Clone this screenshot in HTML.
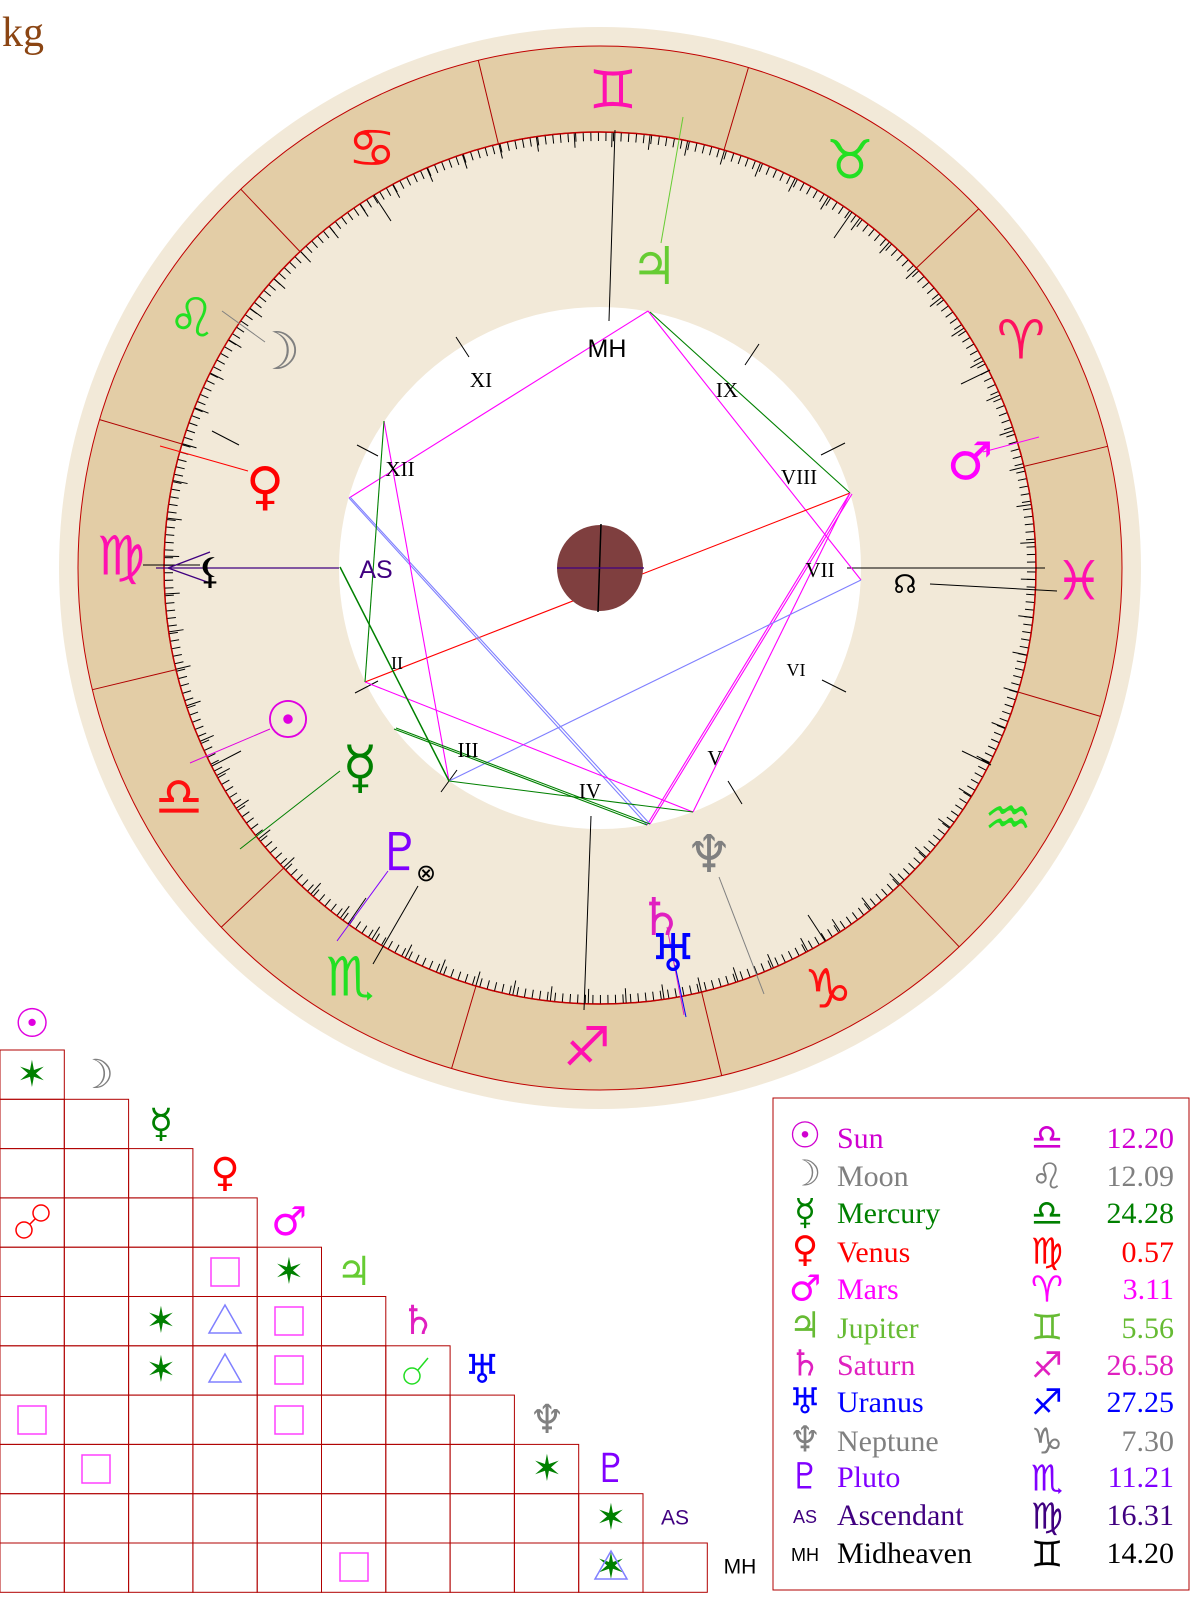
<!DOCTYPE html>
<html><head><meta charset="utf-8"><style>
html,body{margin:0;padding:0;background:#fff;}
svg{display:block}
.g{font-family:"DejaVu Sans",sans-serif;text-anchor:middle;dominant-baseline:central}
.s{font-family:"Liberation Serif",serif}
.ss{font-family:"Liberation Sans",sans-serif}
</style></head><body>
<svg width="1200" height="1600" viewBox="0 0 1200 1600" xmlns="http://www.w3.org/2000/svg">
<text x="2" y="46" class="s" font-size="42" fill="#8b4513">kg</text>

<circle cx="600" cy="568" r="541" fill="#f2e9d8"/>
<circle cx="600" cy="568" r="522" fill="#e3cda6" stroke="#c00000" stroke-width="1"/>
<circle cx="600" cy="568" r="436" fill="#f2e9d8" stroke="#c00000" stroke-width="1.5"/>
<circle cx="600" cy="568" r="261" fill="#fff"/>
<circle cx="600" cy="568" r="431.5" fill="none" stroke="#000" stroke-width="9" stroke-dasharray="1 6.566" stroke-dashoffset="-3.43"/>
<circle cx="600" cy="568" r="428.5" fill="none" stroke="#000" stroke-width="15" stroke-dasharray="1 36.4" stroke-dashoffset="-10.9"/>
<circle cx="600" cy="568" r="436" fill="none" stroke="#c00000" stroke-width="1.2"/>

<g stroke="#b00000" stroke-width="1">
<line x1="1024" y1="466.4" x2="1107.6" y2="446.3"/>
<line x1="916.4" y1="268" x2="978.8" y2="208.8"/>
<line x1="724" y1="150" x2="748.4" y2="67.6"/>
<line x1="498.4" y1="144" x2="478.3" y2="60.4"/>
<line x1="300" y1="251.6" x2="240.8" y2="189.2"/>
<line x1="182" y1="444" x2="99.6" y2="419.6"/>
<line x1="176" y1="669.6" x2="92.4" y2="689.7"/>
<line x1="283.6" y1="868.1" x2="221.2" y2="927.2"/>
<line x1="476" y1="986" x2="451.6" y2="1068.4"/>
<line x1="701.6" y1="992" x2="721.7" y2="1075.6"/>
<line x1="900.1" y1="884.4" x2="959.2" y2="946.8"/>
<line x1="1018" y1="692" x2="1100.4" y2="716.4"/>
</g>

<g class="g" font-size="54">
<text x="1021" y="340" fill="#ff1060">♈&#xFE0E;</text>
<text x="850" y="160" fill="#22e022">♉&#xFE0E;</text>
<text x="613" y="90" fill="#ff10b0">♊&#xFE0E;</text>
<text x="372" y="148" fill="#ff1010">♋&#xFE0E;</text>
<text x="192" y="318" fill="#22e022">♌&#xFE0E;</text>
<text x="121" y="556" fill="#ff10b0">♍&#xFE0E;</text>
<text x="179" y="797" fill="#ff1010">♎&#xFE0E;</text>
<text x="350" y="977" fill="#22e022">♏&#xFE0E;</text>
<text x="587" y="1047" fill="#ff10b0">♐&#xFE0E;</text>
<text x="828" y="989" fill="#ff1010">♑&#xFE0E;</text>
<text x="1008" y="818" fill="#22e022">♒&#xFE0E;</text>
<text x="1079" y="581" fill="#ff10b0">♓&#xFE0E;</text>
</g>

<g stroke="#000" stroke-width="1">
<line x1="239" y1="445" x2="212" y2="431"/>
<line x1="241" y1="751" x2="212" y2="766"/>
<line x1="366" y1="898" x2="348" y2="924"/>
<line x1="808" y1="915" x2="825" y2="941"/>
<line x1="962" y1="751" x2="991" y2="765"/>
<line x1="961" y1="384" x2="990" y2="370"/>
<line x1="834" y1="238" x2="852" y2="212"/>
<line x1="391" y1="221" x2="374" y2="195"/>
<line x1="456" y1="337" x2="469" y2="357"/>
<line x1="357" y1="445" x2="378" y2="456"/>
<line x1="355" y1="693" x2="378" y2="681"/>
<line x1="441" y1="792" x2="457" y2="770"/>
<line x1="742" y1="804" x2="728" y2="781"/>
<line x1="846" y1="692" x2="822" y2="680"/>
<line x1="845" y1="443" x2="821" y2="455"/>
<line x1="759" y1="344" x2="745" y2="365"/>
<line x1="609" y1="321" x2="615" y2="130"/>
<line x1="591" y1="816" x2="584" y2="1010"/>
<line x1="847" y1="568" x2="1045" y2="568"/>
<line x1="143" y1="565" x2="200" y2="565"/>
</g>
<g stroke="#400080" stroke-width="1.3" fill="none">
<line x1="339" y1="568" x2="156" y2="568"/>
<line x1="168" y1="568" x2="210" y2="552"/>
<line x1="168" y1="568" x2="210" y2="583"/>
</g>

<g fill="none" stroke-width="1.1">
<line x1="349" y1="498" x2="648" y2="311" stroke="#ff00ff"/>
<line x1="648" y1="311" x2="861" y2="580" stroke="#ff00ff"/>
<line x1="650" y1="312" x2="850" y2="493" stroke="#008000"/>
<line x1="850" y1="493" x2="365" y2="682" stroke="#ff0000"/>
<line x1="850" y1="493" x2="693" y2="812" stroke="#ff00ff"/>
<line x1="850" y1="493" x2="647" y2="825" stroke="#ff00ff"/>
<line x1="852" y1="494" x2="650" y2="824" stroke="#ff00ff"/>
<line x1="449" y1="781" x2="861" y2="580" stroke="#7f7fff"/>
<line x1="349" y1="498" x2="647" y2="825" stroke="#7f7fff"/>
<line x1="350" y1="497" x2="650" y2="824" stroke="#7f7fff"/>
<line x1="384" y1="421" x2="449" y2="781" stroke="#ff00ff"/>
<line x1="384" y1="421" x2="365" y2="682" stroke="#008000"/>
<line x1="365" y1="682" x2="693" y2="812" stroke="#ff00ff"/>
<line x1="449" y1="781" x2="693" y2="812" stroke="#008000"/>
<line x1="340" y1="567" x2="449" y2="781" stroke="#008000" stroke-width="1.5"/>
<line x1="394" y1="729" x2="647" y2="825" stroke="#008000"/>
<line x1="396" y1="728" x2="650" y2="824" stroke="#008000"/>
</g>

<circle cx="600" cy="568" r="43" fill="#7f3f3f"/>
<line x1="601" y1="524" x2="598" y2="612" stroke="#000" stroke-width="1.5"/>
<line x1="557" y1="568" x2="644" y2="568" stroke="#400080" stroke-width="1.2"/>

<g class="s" font-size="21" fill="#000" text-anchor="middle" dominant-baseline="central">
<text x="481" y="380">XI</text>
<text x="400" y="469">XII</text>
<text x="397" y="663" font-size="18">II</text>
<text x="468" y="750">III</text>
<text x="590" y="791">IV</text>
<text x="715" y="758">V</text>
<text x="796" y="670" font-size="18">VI</text>
<text x="820" y="570">VII</text>
<text x="799" y="477">VIII</text>
<text x="727" y="390">IX</text>
</g>
<text x="607" y="349" class="ss" font-size="25" text-anchor="middle" dominant-baseline="central">MH</text>
<text x="376" y="570" class="ss" font-size="25" fill="#400080" text-anchor="middle" dominant-baseline="central">AS</text>

<g stroke-width="1">
<line x1="683" y1="117" x2="661" y2="243" stroke="#66cc33"/>
<line x1="222" y1="311" x2="265" y2="342" stroke="#808080"/>
<line x1="160" y1="446" x2="248" y2="471" stroke="#ff0000"/>
<line x1="190" y1="763" x2="270" y2="729" stroke="#e000e0"/>
<line x1="240" y1="849" x2="340" y2="771" stroke="#008000"/>
<line x1="337" y1="941" x2="388" y2="871" stroke="#8000ff"/>
<line x1="373" y1="964" x2="418" y2="886" stroke="#000"/>
<line x1="667" y1="927" x2="684" y2="1015" stroke="#e020c0"/>
<line x1="675" y1="965" x2="686" y2="1017" stroke="#0000ff"/>
<line x1="764" y1="994" x2="719" y2="877" stroke="#808080"/>
<line x1="1039" y1="437" x2="983" y2="452" stroke="#ff00ff"/>
<line x1="1057" y1="591" x2="930" y2="584" stroke="#000"/>
</g>
<g class="g" font-size="52">
<text x="654" y="267" fill="#66cc33">♃</text>
<text x="277" y="352" fill="#808080">☽</text>
<text x="265" y="487" fill="#ff0000">♀</text>
<text x="210" y="572" fill="#000" font-size="36">⚸</text>
<text x="288" y="721" fill="#e000e0">☉</text>
<text x="360" y="767" fill="#008000" font-size="58">☿</text>
<text x="400" y="853" fill="#8000ff">♇</text>
<text x="426" y="873" fill="#000" font-size="24">⊗</text>
<text x="661" y="918" fill="#e020c0">♄</text>
<text x="673" y="954" fill="#0000ff">♅</text>
<text x="709" y="855" fill="#808080">♆</text>
<text x="970" y="462" fill="#ff00ff">♂</text>
<text x="905" y="585" fill="#000" font-size="26">☊</text>
</g>

<defs><rect id="c" width="64.3" height="49.3" fill="none" stroke="#b00000" stroke-width="1"/></defs>
<g>
<use href="#c" x="0" y="1050"/>
<use href="#c" x="0" y="1099.3"/><use href="#c" x="64.3" y="1099.3"/>
<use href="#c" x="0" y="1148.6"/><use href="#c" x="64.3" y="1148.6"/><use href="#c" x="128.6" y="1148.6"/>
<use href="#c" x="0" y="1197.9"/><use href="#c" x="64.3" y="1197.9"/><use href="#c" x="128.6" y="1197.9"/><use href="#c" x="192.9" y="1197.9"/>
<use href="#c" x="0" y="1247.2"/><use href="#c" x="64.3" y="1247.2"/><use href="#c" x="128.6" y="1247.2"/><use href="#c" x="192.9" y="1247.2"/><use href="#c" x="257.2" y="1247.2"/>
<use href="#c" x="0" y="1296.5"/><use href="#c" x="64.3" y="1296.5"/><use href="#c" x="128.6" y="1296.5"/><use href="#c" x="192.9" y="1296.5"/><use href="#c" x="257.2" y="1296.5"/><use href="#c" x="321.5" y="1296.5"/>
<use href="#c" x="0" y="1345.8"/><use href="#c" x="64.3" y="1345.8"/><use href="#c" x="128.6" y="1345.8"/><use href="#c" x="192.9" y="1345.8"/><use href="#c" x="257.2" y="1345.8"/><use href="#c" x="321.5" y="1345.8"/><use href="#c" x="385.8" y="1345.8"/>
<use href="#c" x="0" y="1395.1"/><use href="#c" x="64.3" y="1395.1"/><use href="#c" x="128.6" y="1395.1"/><use href="#c" x="192.9" y="1395.1"/><use href="#c" x="257.2" y="1395.1"/><use href="#c" x="321.5" y="1395.1"/><use href="#c" x="385.8" y="1395.1"/><use href="#c" x="450.1" y="1395.1"/>
<use href="#c" x="0" y="1444.4"/><use href="#c" x="64.3" y="1444.4"/><use href="#c" x="128.6" y="1444.4"/><use href="#c" x="192.9" y="1444.4"/><use href="#c" x="257.2" y="1444.4"/><use href="#c" x="321.5" y="1444.4"/><use href="#c" x="385.8" y="1444.4"/><use href="#c" x="450.1" y="1444.4"/><use href="#c" x="514.4" y="1444.4"/>
<use href="#c" x="0" y="1493.7"/><use href="#c" x="64.3" y="1493.7"/><use href="#c" x="128.6" y="1493.7"/><use href="#c" x="192.9" y="1493.7"/><use href="#c" x="257.2" y="1493.7"/><use href="#c" x="321.5" y="1493.7"/><use href="#c" x="385.8" y="1493.7"/><use href="#c" x="450.1" y="1493.7"/><use href="#c" x="514.4" y="1493.7"/><use href="#c" x="578.7" y="1493.7"/>
<use href="#c" x="0" y="1543"/><use href="#c" x="64.3" y="1543"/><use href="#c" x="128.6" y="1543"/><use href="#c" x="192.9" y="1543"/><use href="#c" x="257.2" y="1543"/><use href="#c" x="321.5" y="1543"/><use href="#c" x="385.8" y="1543"/><use href="#c" x="450.1" y="1543"/><use href="#c" x="514.4" y="1543"/><use href="#c" x="578.7" y="1543"/><use href="#c" x="643" y="1543"/>
</g>
<g class="g" font-size="40">
<text x="32" y="1024" fill="#e000e0">☉</text>
<text x="96" y="1075" fill="#808080">☽</text>
<text x="161" y="1124" fill="#008000">☿</text>
<text x="225" y="1173" fill="#ff0000">♀</text>
<text x="289" y="1222" fill="#ff00ff">♂</text>
<text x="354" y="1272" fill="#66cc33">♃</text>
<text x="418" y="1321" fill="#e020c0">♄</text>
<text x="482" y="1370" fill="#0000ff">♅</text>
<text x="547" y="1420" fill="#808080">♆</text>
<text x="611" y="1469" fill="#8000ff">♇</text>
</g>
<text x="675" y="1518" class="ss" font-size="21" fill="#400080" text-anchor="middle" dominant-baseline="central">AS</text>
<text x="740" y="1567" class="ss" font-size="21" fill="#000" text-anchor="middle" dominant-baseline="central">MH</text>
<g class="g" font-size="36" fill="#008000">
<text x="32" y="1075">✶</text>
<text x="289" y="1272">✶</text>
<text x="161" y="1321">✶</text>
<text x="161" y="1370">✶</text>
<text x="547" y="1469">✶</text>
<text x="611" y="1518">✶</text>
<text x="611" y="1567">✶</text>
</g>
<g fill="none" stroke="#ff40ff" stroke-width="1.5">
<rect x="211" y="1258" width="28" height="28"/>
<rect x="275" y="1307" width="28" height="28"/>
<rect x="275" y="1356" width="28" height="28"/>
<rect x="18" y="1406" width="28" height="28"/>
<rect x="275" y="1406" width="28" height="28"/>
<rect x="82" y="1455" width="28" height="28"/>
<rect x="340" y="1553" width="28" height="28"/>
</g>
<g fill="none" stroke="#8080ff" stroke-width="1.5">
<polygon points="225,1305 241,1333 209,1333"/>
<polygon points="225,1354 241,1382 209,1382"/>
<polygon points="611,1551 627,1579 595,1579"/>
</g>
<g fill="none" stroke="#ff0000" stroke-width="1.5">
<circle cx="24" cy="1230" r="8"/><circle cx="41" cy="1213" r="8"/><line x1="30" y1="1224" x2="35" y2="1219"/>
</g>
<g fill="none" stroke="#22dd22" stroke-width="1.5">
<circle cx="412" cy="1376" r="8"/><line x1="418" y1="1370" x2="428" y2="1358"/>
</g>

<rect x="773" y="1098" width="416" height="492" fill="none" stroke="#b00000" stroke-width="1"/>
<g class="s" font-size="30">
<text x="837" y="1148" fill="#d000d0">Sun</text>
<text x="837" y="1186" fill="#808080">Moon</text>
<text x="837" y="1223" fill="#008000">Mercury</text>
<text x="837" y="1262" fill="#ff0000">Venus</text>
<text x="837" y="1299" fill="#ff00ff">Mars</text>
<text x="837" y="1338" fill="#66bb33">Jupiter</text>
<text x="837" y="1375" fill="#e020c0">Saturn</text>
<text x="837" y="1412" fill="#0000ff">Uranus</text>
<text x="837" y="1451" fill="#808080">Neptune</text>
<text x="837" y="1487" fill="#8000ff">Pluto</text>
<text x="837" y="1525" fill="#400080">Ascendant</text>
<text x="837" y="1563" fill="#000">Midheaven</text>
</g>
<g class="s" font-size="30" text-anchor="end">
<text x="1174" y="1148" fill="#d000d0">12.20</text>
<text x="1174" y="1186" fill="#808080">12.09</text>
<text x="1174" y="1223" fill="#008000">24.28</text>
<text x="1174" y="1262" fill="#ff0000">0.57</text>
<text x="1174" y="1299" fill="#ff00ff">3.11</text>
<text x="1174" y="1338" fill="#66bb33">5.56</text>
<text x="1174" y="1375" fill="#e020c0">26.58</text>
<text x="1174" y="1412" fill="#0000ff">27.25</text>
<text x="1174" y="1451" fill="#808080">7.30</text>
<text x="1174" y="1487" fill="#8000ff">11.21</text>
<text x="1174" y="1525" fill="#400080">16.31</text>
<text x="1174" y="1563" fill="#000">14.20</text>
</g>
<g class="g" font-size="36">
<text x="805" y="1136" fill="#d000d0">☉</text>
<text x="805" y="1174" fill="#808080">☽</text>
<text x="805" y="1213" fill="#008000">☿</text>
<text x="805" y="1250" fill="#ff0000">♀</text>
<text x="805" y="1289" fill="#ff00ff">♂</text>
<text x="805" y="1326" fill="#66bb33">♃</text>
<text x="805" y="1364" fill="#e020c0">♄</text>
<text x="805" y="1402" fill="#0000ff">♅</text>
<text x="805" y="1440" fill="#808080">♆</text>
<text x="805" y="1477" fill="#8000ff">♇</text>
</g>
<text x="805" y="1517" class="ss" font-size="18" fill="#400080" text-anchor="middle" dominant-baseline="central">AS</text>
<text x="805" y="1555" class="ss" font-size="18" fill="#000" text-anchor="middle" dominant-baseline="central">MH</text>
<g class="g" font-size="36">
<text x="1047" y="1138" fill="#d000d0">♎&#xFE0E;</text>
<text x="1047" y="1177" fill="#808080">♌&#xFE0E;</text>
<text x="1047" y="1214" fill="#008000">♎&#xFE0E;</text>
<text x="1047" y="1252" fill="#ff0000">♍&#xFE0E;</text>
<text x="1047" y="1290" fill="#ff00ff">♈&#xFE0E;</text>
<text x="1047" y="1328" fill="#66bb33">♊&#xFE0E;</text>
<text x="1047" y="1366" fill="#e020c0">♐&#xFE0E;</text>
<text x="1047" y="1403" fill="#0000ff">♐&#xFE0E;</text>
<text x="1047" y="1442" fill="#808080">♑&#xFE0E;</text>
<text x="1047" y="1479" fill="#8000ff">♏&#xFE0E;</text>
<text x="1047" y="1517" fill="#400080">♍&#xFE0E;</text>
<text x="1047" y="1555" fill="#000">♊&#xFE0E;</text>
</g>
</svg>
</body></html>
